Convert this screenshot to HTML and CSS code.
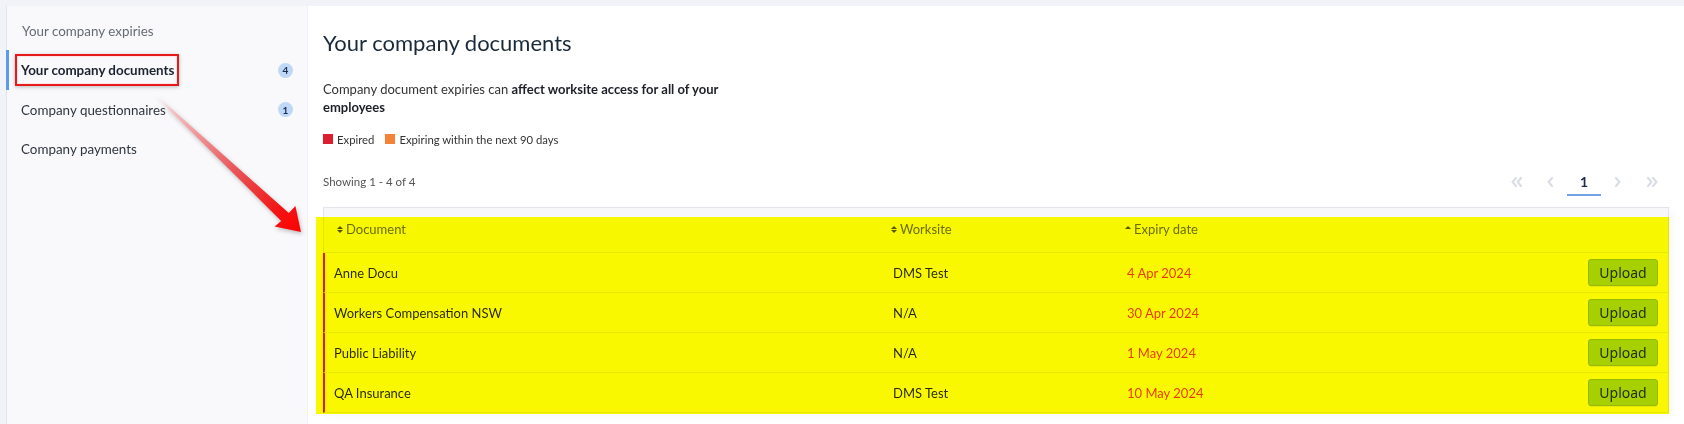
FILE: index.html
```html
<!DOCTYPE html>
<html lang="en">
<head>
<meta charset="utf-8">
<title>Your company documents</title>
<link rel="stylesheet" href="styles.css">
</head>
<body>
<div class="page">
  <aside class="sidebar">
    <nav class="side-nav">
      <a class="nav-item muted" href="#">Your company expiries</a>
      <a class="nav-item active" href="#"><span class="nav-label">Your company documents</span><span class="badge">4</span><span class="annot-box"></span></a>
      <a class="nav-item" href="#"><span class="nav-label">Company questionnaires</span><span class="badge">1</span></a>
      <a class="nav-item" href="#"><span class="nav-label">Company payments</span></a>
    </nav>
  </aside>
  <main class="content">
    <h1 class="title">Your company documents</h1>
    <p class="intro">Company document expiries can <strong>affect worksite access for all of your</strong> <strong>employees</strong></p>
    <div class="legend">
      <span class="legend-item"><span class="swatch swatch-expired"></span>Expired</span>
      <span class="legend-item"><span class="swatch swatch-expiring"></span>Expiring within the next 90 days</span>
    </div>
    <div class="list-bar">
      <span class="showing">Showing 1 - 4 of 4</span>
      <nav class="pager">
        <span class="pg disabled"><svg width="11" height="10" viewBox="0 0 11 10"><path d="M5 1 L1.6 5 L5 9 M10 1 L6.6 5 L10 9"/></svg></span>
        <span class="pg disabled"><svg width="6" height="10" viewBox="0 0 6 10"><path d="M5 1 L1.6 5 L5 9"/></svg></span>
        <span class="pg current">1</span>
        <span class="pg disabled"><svg width="6" height="10" viewBox="0 0 6 10"><path d="M1 1 L4.4 5 L1 9"/></svg></span>
        <span class="pg disabled"><svg width="11" height="10" viewBox="0 0 11 10"><path d="M1 1 L4.4 5 L1 9 M6 1 L9.4 5 L6 9"/></svg></span>
      </nav>
    </div>
    <div class="table-wrap">
      <div class="doc-table">
        <div class="thead">
          <div class="th th-first"><span class="sort both"></span>Document</div>
          <div class="th"><span class="sort both"></span>Worksite</div>
          <div class="th"><span class="sort up"></span>Expiry date</div>
          <div class="th"></div>
        </div>
        <div class="tr expired">
          <div class="td">Anne Docu</div>
          <div class="td">DMS Test</div>
          <div class="td date">4 Apr 2024</div>
          <div class="td action"><button class="btn-upload">Upload</button></div>
        </div>
        <div class="tr expired">
          <div class="td">Workers Compensation NSW</div>
          <div class="td">N/A</div>
          <div class="td date">30 Apr 2024</div>
          <div class="td action"><button class="btn-upload">Upload</button></div>
        </div>
        <div class="tr expired">
          <div class="td">Public Liability</div>
          <div class="td">N/A</div>
          <div class="td date">1 May 2024</div>
          <div class="td action"><button class="btn-upload">Upload</button></div>
        </div>
        <div class="tr expired">
          <div class="td">QA Insurance</div>
          <div class="td">DMS Test</div>
          <div class="td date">10 May 2024</div>
          <div class="td action"><button class="btn-upload">Upload</button></div>
        </div>
      </div>
      <div class="highlight"></div>
    </div>
  </main>
  <svg class="annot-arrow" width="170" height="155" viewBox="0 0 170 155">
    <defs>
      <linearGradient id="arrowGrad" gradientUnits="userSpaceOnUse" x1="13" y1="8" x2="161" y2="147">
        <stop offset="0" stop-color="#ffffff" stop-opacity="0"/>
        <stop offset="0.12" stop-color="#f6c4c6"/>
        <stop offset="0.55" stop-color="#e8555a"/>
        <stop offset="0.85" stop-color="#f21414"/>
        <stop offset="1" stop-color="#ff0000"/>
      </linearGradient>
    </defs>
    <polygon points="13.3,7.6 148.8,128 155.4,120.9 161,147 134.6,141.5 141.2,135.9 12.7,8.4" fill="url(#arrowGrad)"/>
  </svg>
</div>
</body>
</html>
```
FILE: styles.css
```css
* { box-sizing: border-box; }
html, body { margin: 0; padding: 0; }
body {
  background: #f1f3f8;
  font-family: Lato, "Open Sans", sans-serif;
  color: #333;
  height: 424px;
  overflow: hidden;
}
.page {
  position: relative;
  display: flex;
  padding: 6px 0 0 6px;
  height: 424px;
  gap: 1px;
}
.sidebar {
  width: 301px;
  flex: none;
  background: #f9f9fb;
  border-left: 1px solid #e3e5ec;
  padding-top: 5px;
}
.side-nav { display: flex; flex-direction: column; }
.nav-item {
  position: relative;
  display: flex;
  align-items: center;
  justify-content: space-between;
  height: 39px;
  padding: 0 14px 0 12px;
  font-size: 13.4px;
  color: #2f3640;
  text-decoration: none;
  border-left: 3px solid transparent;
  margin-left: -1px;
}
.nav-item.muted { color: #666b73; padding-left: 13px; }
.nav-item.active {
  border-left-color: #5b9bef;
  font-weight: 700;
  color: #1b2330;
  height: 40px;
}
.badge {
  min-width: 15px;
  height: 15px;
  border-radius: 8px;
  background: #bfd8f7;
  color: #1c2c4c;
  font-size: 10px;
  font-weight: 700;
  display: flex;
  align-items: center;
  justify-content: center;
}
.annot-box {
  position: absolute;
  left: 6px;
  top: 4px;
  width: 164px;
  height: 32px;
  border: 2px solid #e61a1a;
  box-shadow: 0 1px 4px rgba(0,0,0,0.25), inset 0 0 0 1px rgba(255,200,200,0.4);
  pointer-events: none;
}
.content {
  flex: 1;
  background: #fff;
  padding: 22px 15px 0 15px;
}
.title {
  margin: 0;
  font-size: 22px;
  line-height: 30px;
  font-weight: 400;
  color: #1a2a3a;
}
.intro {
  margin: 22px 0 0 0;
  width: 420px;
  font-size: 13px;
  line-height: 18px;
  color: #333;
}
.intro strong { color: #1c1f26; font-weight: 700; }
.legend {
  margin-top: 15px;
  height: 16px;
  display: flex;
  align-items: center;
  gap: 11px;
  font-size: 11.3px;
  color: #333;
}
.legend-item { display: flex; align-items: center; gap: 4px; }
.swatch { width: 10px; height: 10px; display: inline-block; }
.swatch-expired { background: #dc1d2e; }
.swatch-expiring { background: #f58236; }
.list-bar {
  margin-top: 20px;
  display: flex;
  align-items: center;
  justify-content: space-between;
  height: 29px;
  width: 1346px;
}
.showing { font-size: 11.5px; color: #555; }
.pager { display: flex; height: 29px; }
.pg {
  width: 34px;
  height: 29px;
  display: flex;
  align-items: center;
  justify-content: center;
  border-bottom: 2px solid transparent;
  padding-top: 2px;
}
.pg svg path {
  fill: none;
  stroke: #dadde5;
  stroke-width: 2.2;
  stroke-linecap: round;
  stroke-linejoin: round;
}
.pg.current {
  color: #1e2c4a;
  border-bottom-color: #6fa1e6;
  font-size: 14px;
  font-weight: 700;
}
.table-wrap {
  position: relative;
  margin-top: 11px;
  width: 1346px;
}
.doc-table {
  border: 1px solid #e3e4ea;
  border-bottom: none;
  background: #fff;
  box-shadow: 3px 3px 8px rgba(0,0,0,0.04);
}
.thead, .tr {
  display: grid;
  grid-template-columns: 559px 234px 1fr auto;
}
.thead {
  height: 45px;
  background: #f7f7fa;
  border-bottom: 1px solid #e6e6e6;
  font-size: 13px;
  color: #6c6c6c;
}
.th {
  display: flex;
  align-items: center;
  padding: 0 8px 2px 8px;
}
.th-first { padding-left: 13px; }
.sort {
  display: inline-flex;
  flex-direction: column;
  gap: 1px;
  margin-right: 3px;
  width: 6px;
}
.sort.both::before, .sort.up::before {
  content: "";
  border-left: 3px solid transparent;
  border-right: 3px solid transparent;
  border-bottom: 3px solid #555;
}
.sort.both::after {
  content: "";
  border-left: 3px solid transparent;
  border-right: 3px solid transparent;
  border-top: 3px solid #555;
}
.sort.up { margin-top: -3px; }
.tr {
  height: 40px;
  border-bottom: 1px solid #e8e8e8;
  border-left: 2px solid #e01818;
  margin-left: -1px;
  font-size: 13px;
  color: #2a2a2a;
}
.td {
  display: flex;
  align-items: center;
  padding: 0 9px;
}
.td.date { color: #e63a12; }
.td.action { padding-right: 10px; justify-content: flex-end; }
.btn-upload {
  width: 70px;
  height: 27px;
  border: 1px solid #93b900;
  border-radius: 3px;
  background: #a6d000;
  color: #233000;
  font-family: "Noto Sans", "Open Sans", sans-serif;
  font-size: 14px;
  padding: 0;
  box-shadow: 0 1px 2px rgba(0,0,0,0.12);
}
.highlight {
  position: absolute;
  left: -7px;
  top: 10px;
  right: 0;
  bottom: -1px;
  background: #faf800;
  mix-blend-mode: darken;
  pointer-events: none;
}
.annot-arrow {
  position: absolute;
  left: 140px;
  top: 85px;
  filter: drop-shadow(1px 2px 2px rgba(0,0,0,0.25));
  pointer-events: none;
}
```
